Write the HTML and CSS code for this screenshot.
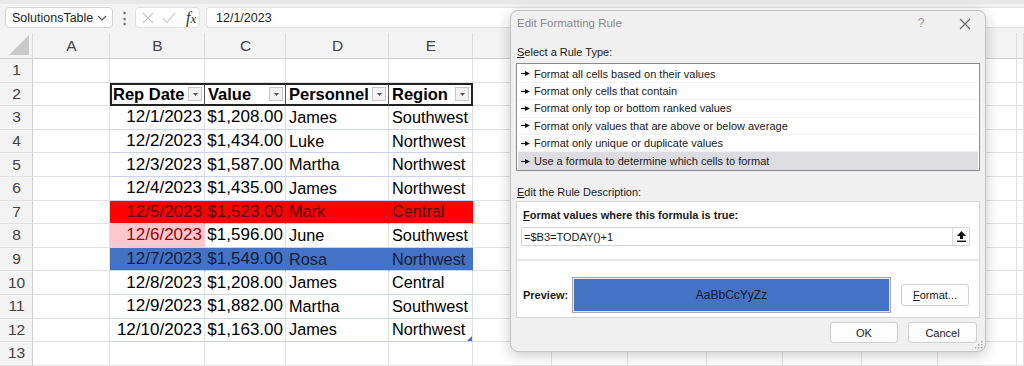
FILE: index.html
```html
<!DOCTYPE html>
<html>
<head>
<meta charset="utf-8">
<link rel="stylesheet" href="styles.css">
</head>
<body>
<div class="app">
  <div class="fbar">
    <div class="namebox"><span>SolutionsTable</span>
      <svg class="chev" width="10" height="6" viewBox="0 0 10 6"><path d="M1 1l4 4 4-4" fill="none" stroke="#555" stroke-width="1.1"/></svg>
    </div>
    <div class="dots">&#8942;</div>
    <div class="fxgroup">
      <svg width="12" height="12" viewBox="0 0 12 12"><path d="M1 1l10 10M11 1L1 11" stroke="#c4c4c4" stroke-width="1.1"/></svg>
      <svg width="14" height="12" viewBox="0 0 14 12"><path d="M1 6.5l4 4L13 1" fill="none" stroke="#c4c4c4" stroke-width="1.1"/></svg>
      <span class="fx">f<span class="fxx">x</span></span>
    </div>
    <div class="finput">12/1/2023</div>
  </div>

  <div class="sheet">
    <div class="row colhdr">
      <div class="corner"><svg width="20" height="20" viewBox="0 0 20 20"><polygon points="20,0 20,20 0,20" fill="#c9c9c9"/></svg></div>
      <div class="ch">A</div><div class="ch">B</div><div class="ch">C</div><div class="ch">D</div><div class="ch">E</div>
      <div class="ch"></div><div class="ch"></div><div class="ch"></div><div class="ch"></div><div class="ch"></div><div class="ch"></div><div class="ch"></div><div class="ch"></div>
    </div>

    <div class="row"><div class="rh">1</div><i></i><i></i><i></i><i></i><i></i><i></i><i></i><i></i><i></i><i></i><i></i><i></i><i></i></div>

    <div class="row"><div class="rh">2</div><i></i>
      <div class="h hl">Rep Date<span class="dd"><svg width="5" height="3" viewBox="0 0 5 3"><polygon points="0,0 5,0 2.5,3" fill="#555"/></svg></span></div>
      <div class="h">Value<span class="dd"><svg width="5" height="3" viewBox="0 0 5 3"><polygon points="0,0 5,0 2.5,3" fill="#555"/></svg></span></div>
      <div class="h">Personnel<span class="dd"><svg width="5" height="3" viewBox="0 0 5 3"><polygon points="0,0 5,0 2.5,3" fill="#555"/></svg></span></div>
      <div class="h hr">Region<span class="dd"><svg width="5" height="3" viewBox="0 0 5 3"><polygon points="0,0 5,0 2.5,3" fill="#555"/></svg></span></div>
      <i></i><i></i><i></i><i></i><i></i><i></i><i></i><i></i></div>

    <div class="row"><div class="rh">3</div><i></i><div class="t r">12/1/2023</div><div class="t r">$1,208.00</div><div class="t s">James</div><div class="t s">Southwest</div><i></i><i></i><i></i><i></i><i></i><i></i><i></i><i></i></div>
    <div class="row"><div class="rh">4</div><i></i><div class="t r">12/2/2023</div><div class="t r">$1,434.00</div><div class="t s">Luke</div><div class="t s">Northwest</div><i></i><i></i><i></i><i></i><i></i><i></i><i></i><i></i></div>
    <div class="row"><div class="rh">5</div><i></i><div class="t r">12/3/2023</div><div class="t r">$1,587.00</div><div class="t s">Martha</div><div class="t s">Northwest</div><i></i><i></i><i></i><i></i><i></i><i></i><i></i><i></i></div>
    <div class="row"><div class="rh">6</div><i></i><div class="t r">12/4/2023</div><div class="t r">$1,435.00</div><div class="t s">James</div><div class="t s">Northwest</div><i></i><i></i><i></i><i></i><i></i><i></i><i></i><i></i></div>
    <div class="row"><div class="rh">7</div><i></i><div class="t r red">12/5/2023</div><div class="t r red">$1,523.00</div><div class="t s red">Mark</div><div class="t s red">Central</div><i></i><i></i><i></i><i></i><i></i><i></i><i></i><i></i></div>
    <div class="row"><div class="rh">8</div><i></i><div class="t r pink">12/6/2023</div><div class="t r">$1,596.00</div><div class="t s">June</div><div class="t s">Southwest</div><i></i><i></i><i></i><i></i><i></i><i></i><i></i><i></i></div>
    <div class="row"><div class="rh">9</div><i></i><div class="t r blue">12/7/2023</div><div class="t r blue">$1,549.00</div><div class="t s blue">Rosa</div><div class="t s blue">Northwest</div><i></i><i></i><i></i><i></i><i></i><i></i><i></i><i></i></div>
    <div class="row"><div class="rh">10</div><i></i><div class="t r">12/8/2023</div><div class="t r">$1,208.00</div><div class="t s">James</div><div class="t s">Central</div><i></i><i></i><i></i><i></i><i></i><i></i><i></i><i></i></div>
    <div class="row"><div class="rh">11</div><i></i><div class="t r">12/9/2023</div><div class="t r">$1,882.00</div><div class="t s">Martha</div><div class="t s">Southwest</div><i></i><i></i><i></i><i></i><i></i><i></i><i></i><i></i></div>
    <div class="row"><div class="rh">12</div><i></i><div class="t r">12/10/2023</div><div class="t r">$1,163.00</div><div class="t s">James</div><div class="t s last">Northwest<span class="handle"></span></div><i></i><i></i><i></i><i></i><i></i><i></i><i></i><i></i></div>
    <div class="row"><div class="rh">13</div><i></i><i></i><i></i><i></i><i></i><i></i><i></i><i></i><i></i><i></i><i></i><i></i><i></i></div>
  </div>

  <div class="dialog">
    <div class="dtitle">
      <span class="dtext">Edit Formatting Rule</span>
      <span class="help">?</span>
      <span class="close"><svg width="12" height="12" viewBox="0 0 12 12"><path d="M1 1l10 10M11 1L1 11" stroke="#666" stroke-width="1.1"/></svg></span>
    </div>
    <div class="lbl1"><u>S</u>elect a Rule Type:</div>
    <div class="list">
      <div class="item"><svg class="arr" width="9" height="5" viewBox="0 0 9 5"><path d="M0 2.5h5" stroke="#111" stroke-width="1.1"/><polygon points="4,0 9,2.5 4,5" fill="#111"/></svg>Format all cells based on their values</div>
      <div class="item"><svg class="arr" width="9" height="5" viewBox="0 0 9 5"><path d="M0 2.5h5" stroke="#111" stroke-width="1.1"/><polygon points="4,0 9,2.5 4,5" fill="#111"/></svg>Format only cells that contain</div>
      <div class="item"><svg class="arr" width="9" height="5" viewBox="0 0 9 5"><path d="M0 2.5h5" stroke="#111" stroke-width="1.1"/><polygon points="4,0 9,2.5 4,5" fill="#111"/></svg>Format only top or bottom ranked values</div>
      <div class="item"><svg class="arr" width="9" height="5" viewBox="0 0 9 5"><path d="M0 2.5h5" stroke="#111" stroke-width="1.1"/><polygon points="4,0 9,2.5 4,5" fill="#111"/></svg>Format only values that are above or below average</div>
      <div class="item"><svg class="arr" width="9" height="5" viewBox="0 0 9 5"><path d="M0 2.5h5" stroke="#111" stroke-width="1.1"/><polygon points="4,0 9,2.5 4,5" fill="#111"/></svg>Format only unique or duplicate values</div>
      <div class="item sel"><svg class="arr" width="9" height="5" viewBox="0 0 9 5"><path d="M0 2.5h5" stroke="#111" stroke-width="1.1"/><polygon points="4,0 9,2.5 4,5" fill="#111"/></svg>Use a formula to determine which cells to format</div>
    </div>
    <div class="lbl2"><u>E</u>dit the Rule Description:</div>
    <div class="desc">
      <div class="dtop">
        <div class="fhead"><u>F</u>ormat values where this formula is true:</div>
        <div class="formula"><span>=$B3=TODAY()+1</span>
          <span class="upbtn"><svg width="9" height="11" viewBox="0 0 9 11"><polygon points="4.5,0 9,5 6,5 6,8 3,8 3,5 0,5" fill="#111"/><rect x="0" y="9.6" width="9" height="1.4" fill="#111"/></svg></span>
        </div>
      </div>
      <div class="dbot">
        <div class="prow">
          <span class="plbl">Preview:</span>
          <div class="pbox"><span>AaBbCcYyZz</span></div>
          <div class="btn fmt"><u>F</u>ormat...</div>
        </div>
      </div>
    </div>
    <div class="btns">
      <div class="btn ok">OK</div>
      <div class="btn cancel">Cancel</div>
    </div>
    <svg class="grip" width="8" height="8" viewBox="0 0 8 8"><rect x="6" y="0" width="1.5" height="1.5" fill="#aaa"/><rect x="3" y="3" width="1.5" height="1.5" fill="#aaa"/><rect x="6" y="3" width="1.5" height="1.5" fill="#aaa"/><rect x="0" y="6" width="1.5" height="1.5" fill="#aaa"/><rect x="3" y="6" width="1.5" height="1.5" fill="#aaa"/><rect x="6" y="6" width="1.5" height="1.5" fill="#aaa"/></svg>
  </div>
</div>
</body>
</html>
```

FILE: styles.css
```css
* { box-sizing: border-box; margin: 0; padding: 0; }
body {
  margin: 0;
  width: 1024px;
  height: 366px;
  overflow: hidden;
  background: #fff;
  font-family: "Liberation Sans", Arial, sans-serif;
  color: #000;
}
.app { position: relative; width: 1024px; height: 366px; overflow: hidden; }

/* formula bar */
.fbar {
  height: 33px;
  background: #f3f3f3;
  border-top: 4px solid #e8e8e8;
  padding: 3px 0 0 5px;
  display: flex;
  align-items: flex-start;
}
.namebox {
  width: 108px; height: 21px;
  background: #fff;
  border: 1px solid #d4d4d4;
  border-radius: 4px;
  display: flex; align-items: center; justify-content: space-between;
  padding: 0 5px 0 6px;
  font-size: 12.5px; color: #222;
}
.chev { margin-top: 1px; }
.dots {
  width: 22px; height: 21px;
  display: flex; align-items: center; justify-content: center;
  color: #777; font-size: 15px; font-weight: bold;
}
.fxgroup {
  width: 65px; height: 21px;
  background: #fff;
  border: 1px solid #e2e2e2;
  border-radius: 4px;
  display: flex; align-items: center;
  padding-left: 6px; gap: 8px;
}
.fx {
  font-family: "Liberation Serif", "DejaVu Serif", serif;
  font-style: italic; font-size: 16px; color: #333;
  margin-left: 2px;
}
.fxx { font-size: 13px; }
.finput {
  flex: 1;
  margin-left: 6px;
  height: 21px;
  background: #fff;
  border: 1px solid #e2e2e2;
  border-right: none;
  border-radius: 4px 0 0 4px;
  display: flex; align-items: center;
  padding-left: 9px;
  font-size: 12.5px; color: #222;
}

/* sheet */
.row {
  display: grid;
  grid-template-columns: 33px 77px 95px 81px 103px 84px 79px 76px 79px 76px 79px 76px 79px 1fr;
  height: 23.6px;
}
.row > * {
  border-right: 1px solid #e1e1e1;
  border-bottom: 1px solid #e1e1e1;
  display: flex; align-items: center;
  white-space: nowrap;
  font-size: 17px;
  padding: 0 2px 0 3px;
}
.row > .s { font-size: 16.3px; }
.colhdr { height: 26px; background: #f3f3f3; }
.colhdr > * { border-bottom: 1px solid #cfcfcf; border-right: 1px solid #dcdcdc; }
.corner { padding: 0 !important; justify-content: flex-end; align-items: flex-end !important; }
.corner svg { margin: 0 3px 3px 0; }
.ch { justify-content: center; font-size: 15.5px !important; color: #444; }
.rh {
  background: #f3f3f3;
  justify-content: center;
  font-size: 15.5px !important;
  color: #444;
  border-right: 1px solid #cfcfcf !important;
  border-bottom: 1px solid #e0e0e0 !important;
}

/* table */
.row > .h {
  font-weight: bold;
  font-size: 16.5px;
  border-top: 2px solid #222;
  border-bottom: 2px solid #222;
  border-right: 1px solid #555;
  justify-content: space-between;
  padding: 0 2px 0 3px;
}
.row > .hl { border-left: 2px solid #222; padding-left: 1px; }
.row > .hr { border-right: 2px solid #222; }
.dd {
  width: 14px; height: 14px;
  border: 1px solid #c8c8c8;
  background: #f3f3f3;
  display: flex; align-items: center; justify-content: center;
}
.row > .t { border-bottom: 1px solid #c9d3ea; }
.r { justify-content: flex-end; }
.row > .red { background: #ff0000; color: #4a0000; border-right-color: transparent; }
.row > .pink { background: #ffc7ce; color: #9c0006; border-right-color: #ffc7ce; }
.row > .blue { background: #4472c4; color: #14203f; border-right-color: transparent; }
.last { position: relative; }
.handle {
  position: absolute; right: 0; bottom: 0;
  width: 0; height: 0;
  border-left: 5px solid transparent;
  border-bottom: 5px solid #4a6bc0;
}

/* dialog */
.dialog {
  position: absolute;
  left: 510px; top: 10px;
  width: 476px; height: 342px;
  background: #f0f0f0;
  border: 1px solid #c3c3c3;
  border-radius: 8px;
  box-shadow: 0 3px 14px rgba(0,0,0,0.22);
  font-size: 11px;
  color: #1a1a1a;
  display: flex; flex-direction: column;
}
.dtitle {
  height: 30px;
  display: flex; align-items: flex-start;
  padding: 6px 0 0 6px;
  line-height: 13px;
}
.dtext { color: #8a8a8a; font-size: 11.5px; flex: 1; }
.help { width: 48px; text-align: center; color: #999; font-size: 12px; }
.close { width: 40px; display: flex; justify-content: center; padding-top: 1px; }
.lbl1 { height: 22px; line-height: 22px; padding-left: 6px; }
.list {
  margin: 0 5px;
  height: 108px;
  background: #fff;
  border: 1px solid #8a8a8a;
  padding: 1.5px 1px 0;
}
.item {
  height: 17.4px;
  display: flex; align-items: center;
  padding-left: 3px;
  border-bottom: 1px solid #f2f2f2;
}
.item .arr { margin-right: 4px; }
.item.sel { background: #dddce1; border-bottom: none; }
.lbl2 { height: 30px; line-height: 18px; padding: 12px 0 0 6px; }
.desc {
  margin: 0 5px;
  height: 117px;
  background: #fff;
  border: 1px solid #d8d8d8;
  display: flex; flex-direction: column;
}
.dtop { height: 59px; border-bottom: 2px solid #e8e8e8; padding: 5px 9px 0 4px; }
.fhead { font-weight: bold; height: 16px; line-height: 16px; padding-left: 2px; }
.formula {
  margin-top: 4px;
  height: 19px;
  border: 1px solid #d3d3d3;
  border-radius: 2px;
  display: flex; align-items: center; justify-content: space-between;
  padding-left: 2px;
}
.upbtn {
  width: 17px; height: 17px;
  border-left: 1px solid #e0e0e0;
  display: flex; align-items: center; justify-content: center;
}
.dbot { flex: 1; display: flex; align-items: flex-end; padding: 0 10px 4px 6px; }
.prow { height: 36px; width: 100%; display: flex; align-items: center; }
.plbl { font-weight: bold; width: 49px; }
.pbox {
  width: 319px; height: 36px;
  background: #4472c4;
  border: 1px solid #a9a9a9;
  box-shadow: inset 0 0 0 1px #e8e8e8;
  display: flex; align-items: center; justify-content: center;
  font-size: 12px; color: #111a33;
}
.btn {
  height: 21px;
  background: #fdfdfd;
  border: 1px solid #d0d0d0;
  border-radius: 3px;
  display: flex; align-items: center; justify-content: center;
}
.fmt { width: 68px; margin-left: 10px; height: 22px; }
.btns { display: flex; justify-content: flex-end; gap: 10px; padding-right: 8px; margin-top: 4px; }
.ok { width: 68px; }
.cancel { width: 69px; }
.grip { position: absolute; right: 2px; bottom: 2px; }
```
